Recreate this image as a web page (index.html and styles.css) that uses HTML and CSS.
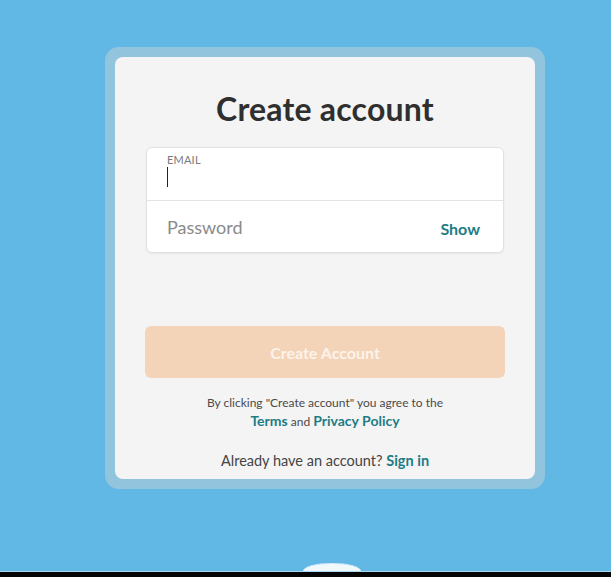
FILE: index.html
```html
<!DOCTYPE html>
<html lang="en">
<head>
<meta charset="utf-8">
<title>Create account</title>
<link rel="stylesheet" href="styles.css">
</head>
<body>
<main class="page">
  <div class="stage">
    <div class="frame">
      <section class="card">
        <h1 class="title">Create account</h1>
        <div class="fields">
          <div class="field field-email">
            <span class="field-label">EMAIL</span>
            <span class="caret"></span>
          </div>
          <div class="field field-password">
            <span class="placeholder">Password</span>
            <span class="show">Show</span>
          </div>
        </div>
        <button class="submit" type="button">Create Account</button>
        <p class="legal">By clicking "Create account" you agree to the<br><a class="link">Terms</a> and <a class="link">Privacy Policy</a></p>
        <p class="signin">Already have an account? <a class="link">Sign in</a></p>
      </section>
    </div>
  </div>
  <div class="ground">
    <div class="cloud"></div>
    <div class="bar"></div>
  </div>
</main>
</body>
</html>
```
FILE: styles.css
```css
* { box-sizing: border-box; }
html, body { margin: 0; padding: 0; }
body {
  background: #62b8e4;
  font-family: Lato, "Open Sans", sans-serif;
  color: #333;
}
.page {
  height: 577px;
  display: flex;
  flex-direction: column;
  overflow: hidden;
}
.stage {
  flex: 1;
  padding: 47px 0 0 105px;
}
.frame {
  width: 440px;
  padding: 10px;
  background: #93c4de;
  border-radius: 14px;
}
.card {
  width: 420px;
  height: 422px;
  background: #f4f4f4;
  border-radius: 8px;
  padding: 34px 31px 0;
  display: flex;
  flex-direction: column;
  align-items: center;
}
.title {
  margin: 0;
  font-size: 32px;
  line-height: 36px;
  font-weight: 700;
  color: #2f2f2f;
  letter-spacing: 0.2px;
}
.fields {
  margin-top: 20px;
  width: 358px;
  background: #fff;
  border: 1px solid #e1e1e1;
  border-radius: 6px;
  box-shadow: 0 1px 2px rgba(0,0,0,0.06);
}
.field {
  padding: 0 23px 0 20px;
}
.field-email {
  height: 53px;
  border-bottom: 1px solid #e3e3e3;
  display: flex;
  flex-direction: column;
  padding-top: 5px;
}
.field-label {
  font-size: 11px;
  line-height: 13px;
  color: #7a7a7a;
  letter-spacing: 0.2px;
}
.caret {
  margin-top: 1px;
  width: 1px;
  height: 20px;
  background: #222;
}
.field-password {
  height: 51px;
  display: flex;
  align-items: center;
  justify-content: space-between;
}
.placeholder {
  font-size: 18px;
  color: #8a8a8a;
}
.show {
  font-size: 16px;
  font-weight: 700;
  color: #1d7c86;
  margin-top: 3px;
}
.submit {
  margin-top: 73px;
  width: 360px;
  height: 52px;
  border: 0;
  border-radius: 6px;
  background: #f3d4b8;
  color: #fdf3ea;
  font-family: inherit;
  font-size: 16px;
  font-weight: 700;
}
.legal {
  margin: 16px 0 0;
  text-align: center;
  font-size: 12px;
  line-height: 18px;
  color: #4a4a4a;
}
.link {
  color: #1d7c86;
  font-weight: 700;
  font-size: 14px;
}
.signin {
  margin: 20px 0 0;
  font-size: 14.5px;
  line-height: 20px;
  color: #444;
}
.signin .link { font-size: 14.5px; }
.ground {
  position: relative;
  height: 7px;
}
.cloud {
  position: absolute;
  left: 303px;
  bottom: 6px;
  width: 58px;
  height: 8px;
  background: #f2f9fd;
  border-top: 1px solid #cfe9f7;
  border-radius: 50% 50% 0 0 / 100% 100% 0 0;
}
.bar {
  position: absolute;
  left: 0;
  right: 0;
  bottom: 0;
  height: 6px;
  background: #050505;
  border-top: 1px solid #a9d8f0;
}
```
